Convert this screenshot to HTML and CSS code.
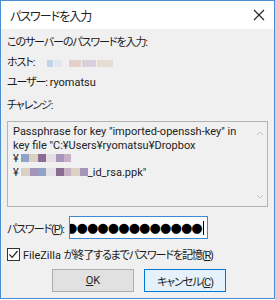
FILE: index.html
```html
<!DOCTYPE html>
<html lang="ja">
<head>
    <meta charset="UTF-8">
    <title>パスワードを入力</title>
    <link rel="stylesheet" href="styles.css">
</head>
<body>
    <div class="window">
        <div class="titlebar">
            <span class="title ja">パスワードを入力</span>
            <svg class="close" width="12" height="12" viewBox="0 0 12 12">
                <path d="M1 1L11 11M11 1L1 11" stroke="#222" stroke-width="1.1" fill="none"/>
            </svg>
        </div>

        <div class="content">
            <div class="row ja">このサーバーのパスワードを入力:</div>
            <div class="row">
                <span class="host-label ja">ホスト:</span>
                <span class="blur">
                    <i class="b1"></i><i class="b2"></i><i class="b3"></i><i class="b4"></i><i class="b5"></i>
                </span>
            </div>
            <div class="row"><span class="ja">ユーザー:</span>&nbsp;ryomatsu</div>
            <div class="row challenge-label ja">チャレンジ:</div>

            <div class="challenge">
                <div class="challenge-text">
                    <div>Passphrase for key "imported-openssh-key" in</div>
                    <div>key file "C:¥Users¥ryomatsu¥Dropbox</div>
                    <div>¥<span class="blur inline">
                        <i class="c1"></i><i class="c2"></i><i class="c3"></i><i class="c4"></i><i class="c5"></i><i class="c6"></i>
                    </span></div>
                    <div>¥<span class="blur inline">
                        <i class="c2"></i><i class="c5"></i><i class="c1"></i><i class="c4"></i><i class="c3"></i><i class="c6"></i><i class="c2"></i><i class="c5"></i>
                    </span>_id_rsa.ppk"</div>
                </div>
                <div class="scrollbar">
                    <svg width="8" height="6" viewBox="0 0 8 6"><path d="M1 5L4 2L7 5" stroke="#c4c4c4" fill="none"/></svg>
                    <svg width="8" height="6" viewBox="0 0 8 6"><path d="M1 1L4 4L7 1" stroke="#c4c4c4" fill="none"/></svg>
                </div>
            </div>

            <div class="password-row">
                <span class="password-label ja">パスワード(<u>P</u>):</span>
                <div class="password-input">
                    <span class="dots">●●●●●●●●●●●●●</span><span class="caret"></span>
                </div>
            </div>

            <label class="remember">
                <span class="checkbox">
                    <svg width="11" height="11" viewBox="0 0 11 11"><path d="M1.5 5.5L4.2 8.3L9.5 2" stroke="#222" stroke-width="1.2" fill="none"/></svg>
                </span>
                <span>FileZilla <span class="ja">が終了するまでパスワードを記憶(<u>R</u>)</span></span>
            </label>

            <div class="buttons">
                <button class="btn"><u>O</u>K</button>
                <button class="btn default"><span class="ja">キャンセル(<u>C</u>)</span></button>
            </div>
        </div>
    </div>
</body>
</html>
```

FILE: styles.css
```css
/* ダイアログ全体 */
body {
    margin: 0;
    padding: 0;
    background: #fff;
    font-family: Roboto, "Noto Sans CJK JP", sans-serif;
    font-size: 11px;
    font-feature-settings: "palt";
    color: #1a1a1a;
    white-space: nowrap;
}

/* 日本語は Meiryo UI 風に詰める */
.ja {
    letter-spacing: -1.1px;
}

.window {
    width: 275px;
    height: 299px;
    box-sizing: border-box;
    border: 1px solid #4b8fd2;
    background: #f0f0f0;
    display: flex;
    flex-direction: column;
    overflow: hidden;
}

.titlebar {
    height: 28px;
    flex: none;
    background: #fff;
    display: flex;
    align-items: center;
    justify-content: space-between;
    padding: 0 9px 0 9px;
}

.title {
    font-size: 12px;
    letter-spacing: -1px;
    color: #222;
}

.content {
    padding: 4px 6px 0 6px;
}

.row {
    height: 20px;
    line-height: 20px;
    display: flex;
    align-items: center;
}

.host-label {
    width: 40px;
}

.blur {
    display: inline-flex;
    align-items: center;
    gap: 1px;
    height: 7px;
    filter: blur(0.6px);
}

.blur i {
    display: inline-block;
    height: 7px;
}

.b1 { width: 6px; background: #c5d3e8; }
.b2 { width: 8px; margin-right: 6px; background: #e0e6ef; }
.b3 { width: 12px; background: #e4cfc9; }
.b4 { width: 14px; background: #d8cfdf; }
.b5 { width: 16px; background: #e7dcd2; }

.challenge-label {
    margin-top: 3px;
}

.challenge {
    margin-top: 5px;
    height: 86px;
    box-sizing: border-box;
    border: 1px solid #b4b4b4;
    background: #f0f0f0;
    display: flex;
}

.challenge-text {
    flex: 1;
    padding: 3px 0 0 5px;
    line-height: 13.6px;
    color: #222;
}

.blur.inline {
    height: 8px;
    margin-left: 2px;
    gap: 0;
    filter: blur(0.5px);
}

.blur.inline i {
    height: 8px;
}

.c1 { width: 8px; background: #8fa3c4; }
.c2 { width: 9px; background: #d9d2c2; }
.c3 { width: 8px; background: #8a6b92; }
.c4 { width: 10px; background: #e4dfe6; }
.c5 { width: 8px; background: #a695b8; }
.c6 { width: 7px; background: #c7b0c5; }

.scrollbar {
    width: 15px;
    display: flex;
    flex-direction: column;
    justify-content: space-between;
    align-items: center;
    padding: 8px 0 6px;
}

.password-row {
    display: flex;
    align-items: center;
    margin-top: 9px;
}

.password-label {
    width: 62px;
}

.password-input {
    width: 139px;
    height: 23px;
    box-sizing: border-box;
    border: 1px solid #3c8ad0;
    background: #fff;
    display: flex;
    align-items: center;
    overflow: hidden;
}

.dots {
    font-family: "DejaVu Sans", sans-serif;
    font-size: 13px;
    letter-spacing: -0.9px;
    margin-left: -4px;
    color: #000;
}

.caret {
    width: 1px;
    height: 14px;
    background: #000;
    margin-left: 1px;
}

.remember {
    display: flex;
    align-items: center;
    height: 18px;
    margin-top: 6px;
    gap: 3px;
}

.checkbox {
    width: 13px;
    height: 13px;
    box-sizing: border-box;
    border: 1px solid #333;
    background: #fff;
    display: flex;
    align-items: center;
    justify-content: center;
}

.buttons {
    display: flex;
    gap: 10px;
    margin-top: 6px;
    padding-left: 45px;
}

.btn {
    width: 82px;
    height: 23px;
    font-family: inherit;
    font-size: 11px;
    font-feature-settings: "palt";
    color: #222;
    background: #e1e1e1;
    border: 1px solid #adadad;
    padding: 0;
}

.btn.default {
    background: #e5f1fb;
    border: 1px solid #0078d7;
}
```
